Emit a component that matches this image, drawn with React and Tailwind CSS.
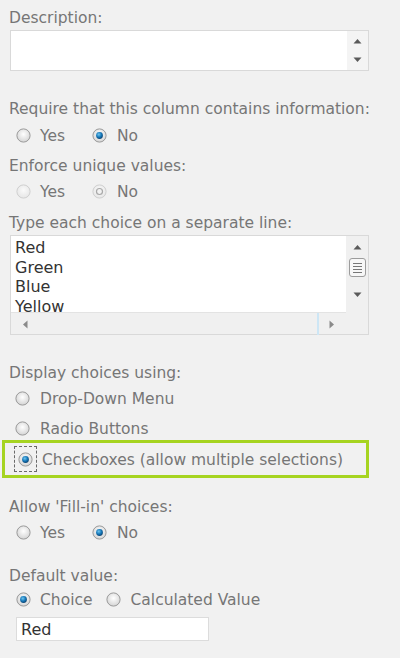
import React from "react";

const font = { fontFamily: '"DejaVu Sans", Verdana, sans-serif' };

function Radio({ checked = false, disabled = false }) {
  const id = React.useId().replace(/:/g, "");
  return (
    <svg width="15" height="15" viewBox="0 0 15 15" className="shrink-0">
      <defs>
        <radialGradient id={`g${id}`} cx="50%" cy="40%" r="60%">
          <stop offset="0%" stopColor={disabled ? "#fafafa" : "#ffffff"} />
          <stop offset="100%" stopColor={disabled ? "#e6e6e6" : "#d4d4d4"} />
        </radialGradient>
        <radialGradient id={`b${id}`} cx="40%" cy="35%" r="70%">
          <stop offset="0%" stopColor="#6fc6f0" />
          <stop offset="55%" stopColor="#1577b8" />
          <stop offset="100%" stopColor="#0b3e6a" />
        </radialGradient>
      </defs>
      <circle
        cx="7.5"
        cy="7.5"
        r="6.6"
        fill={`url(#g${id})`}
        stroke={disabled ? "#cfcfcf" : "#9a9a9a"}
        strokeWidth="1"
      />
      {checked && !disabled && (
        <circle cx="7.5" cy="7.5" r="3.4" fill={`url(#b${id})`} />
      )}
      {checked && disabled && (
        <circle cx="7.5" cy="7.5" r="3" fill="#f2f2f2" stroke="#a8a8a8" strokeWidth="1.2" />
      )}
    </svg>
  );
}

function Label({ children, className = "" }) {
  return (
    <div className={`h-[20px] flex items-center pl-[9px] pt-[4px] text-[15.5px] text-[#767676] whitespace-nowrap ${className}`}>
      {children}
    </div>
  );
}

function Txt({ children, className = "" }) {
  return <span className={`pt-[3px] ${className}`}>{children}</span>;
}

function YesNo({ no = true, disabled = false, className = "" }) {
  return (
    <div className={`h-[24px] flex items-center pl-[16px] text-[15.5px] text-[#767676] ${className}`}>
      <Radio checked={!no} disabled={disabled} />
      <Txt className="ml-[9px] w-[52px]">Yes</Txt>
      <Radio checked={no} disabled={disabled} />
      <Txt className="ml-[10px]">No</Txt>
    </div>
  );
}

function UpArrow() {
  return (
    <svg width="9" height="6" viewBox="0 0 9 6">
      <path d="M0.5 5.5 L4.5 1 L8.5 5.5 Z" fill="#5a5a5a" />
    </svg>
  );
}
function DownArrow() {
  return (
    <svg width="9" height="6" viewBox="0 0 9 6">
      <path d="M0.5 0.5 L4.5 5 L8.5 0.5 Z" fill="#5a5a5a" />
    </svg>
  );
}

export default function App() {
  return (
    <div className="w-[400px] h-[658px] bg-[#f1f1f1] overflow-hidden pt-[7px]" style={font}>
      <Label>Description:</Label>
      <div className="mt-[3px] ml-[10px] w-[359px] h-[41px] flex border border-[#d9d9d9] bg-white">
        <div className="flex-1" />
        <div className="w-[21px] bg-[#f4f4f4] flex flex-col items-center justify-between py-[7px]">
          <UpArrow />
          <DownArrow />
        </div>
      </div>

      <Label className="mt-[27px]">Require that this column contains information:</Label>
      <YesNo className="mt-[5px]" />

      <Label className="mt-[8px]">Enforce unique values:</Label>
      <YesNo className="mt-[4px]" disabled />

      <Label className="mt-[9px]">Type each choice on a separate line:</Label>
      <div className="mt-[3px] ml-[10px] w-[359px] h-[100px] border border-[#d9d9d9] bg-[#f0f0f0] flex flex-col">
        <div className="flex h-[76px]">
          <div className="flex-1 bg-white pl-[4px] pt-[2px] text-[16px] leading-[19.5px] text-[#333333]">
            <div>Red</div>
            <div>Green</div>
            <div>Blue</div>
            <div>Yellow</div>
          </div>
          <div className="w-[22px] flex flex-col items-center pt-[8px]">
            <UpArrow />
            <div className="mt-[8px] w-[17px] h-[19px] rounded-[3px] border border-[#9c9c9c] bg-[#f7f7f7] flex flex-col items-center justify-center gap-[2px]">
              <div className="w-[9px] h-[1px] bg-[#777]" />
              <div className="w-[9px] h-[1px] bg-[#777]" />
              <div className="w-[9px] h-[1px] bg-[#777]" />
              <div className="w-[9px] h-[1px] bg-[#777]" />
            </div>
            <div className="mt-[15px]">
              <DownArrow />
            </div>
          </div>
        </div>
        <div className="flex-1 flex">
          <div className="w-[335px] flex items-center justify-between pl-[11px] pr-[11px] border-t border-[#e3e3e3]">
            <svg width="6" height="9" viewBox="0 0 6 9">
              <path d="M5.5 0.5 L1 4.5 L5.5 8.5 Z" fill="#8a8a8a" />
            </svg>
            <div className="flex items-center gap-[10px]">
              <div className="w-[2px] h-[22px] bg-[#cde6f5]" />
              <svg width="6" height="9" viewBox="0 0 6 9">
                <path d="M0.5 0.5 L5 4.5 L0.5 8.5 Z" fill="#8a8a8a" />
              </svg>
            </div>
          </div>
          <div className="flex-1" />
        </div>
      </div>

      <Label className="mt-[27px]">Display choices using:</Label>
      <div className="mt-[4px] h-[24px] flex items-center pl-[15px] text-[15.5px] text-[#767676]">
        <Radio />
        <Txt className="ml-[10px]">Drop-Down Menu</Txt>
      </div>
      <div className="mt-[6px] h-[24px] flex items-center pl-[15px] text-[15.5px] text-[#767676]">
        <Radio />
        <Txt className="ml-[10px]">Radio Buttons</Txt>
      </div>
      <div className="ml-[2px] w-[367px] h-[38px] border-[3px] border-[#a6d421] flex items-center pl-[9px] text-[15.5px] text-[#767676] whitespace-nowrap">
        <div className="w-[23px] h-[26px] border border-dashed border-[#6a6a6a] flex items-center justify-center">
          <Radio checked />
        </div>
        <Txt className="ml-[5px]">Checkboxes (allow multiple selections)</Txt>
      </div>

      <Label className="mt-[18px]">Allow 'Fill-in' choices:</Label>
      <YesNo className="mt-[4px]" />

      <Label className="mt-[21px]">Default value:</Label>
      <div className="mt-[2px] h-[24px] flex items-center pl-[16px] text-[15.5px] text-[#767676]">
        <Radio checked />
        <Txt className="ml-[9px]">Choice</Txt>
        <span className="ml-[13px]">
          <Radio />
        </span>
        <Txt className="ml-[10px]">Calculated Value</Txt>
      </div>
      <div className="mt-[6px] ml-[16px] w-[193px] h-[24px] bg-white border border-[#dcdcdc] flex items-center pl-[4px] pt-[2px] text-[16px] text-[#333333]">
        Red
      </div>
    </div>
  );
}
